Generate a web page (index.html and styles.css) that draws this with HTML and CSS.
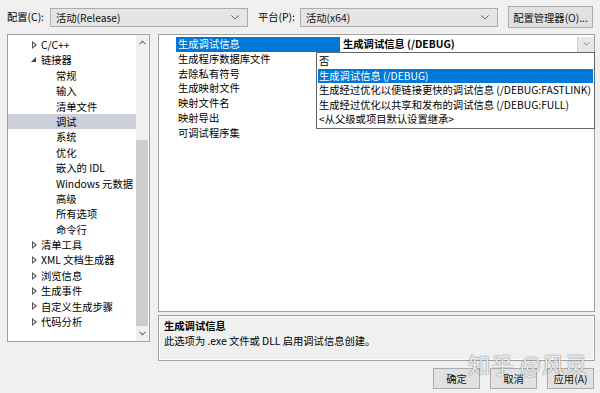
FILE: index.html
```html
<!DOCTYPE html>
<html lang="zh-CN">
<head>
<meta charset="utf-8">
<link rel="stylesheet" href="styles.css">
</head>
<body>
<div class="top">
  <span class="lbl">配置(C):</span>
  <div class="combo cfg"><span>活动(Release)</span><svg class="chev" viewBox="0 0 8 5"><path d="M0.5 0.5 L4 4 L7.5 0.5" fill="none" stroke="#606060" stroke-width="1"/></svg></div>
  <span class="lbl plat-lbl">平台(P):</span>
  <div class="combo plat"><span>活动(x64)</span><svg class="chev" viewBox="0 0 8 5"><path d="M0.5 0.5 L4 4 L7.5 0.5" fill="none" stroke="#606060" stroke-width="1"/></svg></div>
  <div class="btn mgr">配置管理器(O)...</div>
</div>
<div class="main">
  <div class="tree">
    <div class="tree-items">
      <div class="row top-lvl"><span class="tri closed"></span>C/C++</div>
      <div class="row top-lvl"><span class="tri open"></span>链接器</div>
      <div class="row child">常规</div>
      <div class="row child">输入</div>
      <div class="row child">清单文件</div>
      <div class="row child sel">调试</div>
      <div class="row child">系统</div>
      <div class="row child">优化</div>
      <div class="row child">嵌入的 IDL</div>
      <div class="row child">Windows 元数据</div>
      <div class="row child">高级</div>
      <div class="row child">所有选项</div>
      <div class="row child">命令行</div>
      <div class="row top-lvl"><span class="tri closed"></span>清单工具</div>
      <div class="row top-lvl"><span class="tri closed"></span>XML 文档生成器</div>
      <div class="row top-lvl"><span class="tri closed"></span>浏览信息</div>
      <div class="row top-lvl"><span class="tri closed"></span>生成事件</div>
      <div class="row top-lvl"><span class="tri closed"></span>自定义生成步骤</div>
      <div class="row top-lvl"><span class="tri closed"></span>代码分析</div>
    </div>
    <div class="vscroll">
      <svg class="sarrow" viewBox="0 0 8 5"><path d="M0.5 4.5 L4 1 L7.5 4.5" fill="none" stroke="#606060" stroke-width="1.2"/></svg>
      <div class="strack"><div class="sthumb"></div></div>
      <svg class="sarrow" viewBox="0 0 8 5"><path d="M0.5 0.5 L4 4 L7.5 0.5" fill="none" stroke="#606060" stroke-width="1.2"/></svg>
    </div>
  </div>
  <div class="right">
    <div class="grid">
      <div class="prow"><div class="pname psel">生成调试信息</div><div class="pval editing"><b>生成调试信息 (/DEBUG)</b><span class="ddbtn"><svg viewBox="0 0 8 5"><path d="M0.5 0.5 L4 4 L7.5 0.5" fill="none" stroke="#606060" stroke-width="1"/></svg></span></div></div>
      <div class="prow"><div class="pname">生成程序数据库文件</div><div class="pval"></div></div>
      <div class="prow"><div class="pname">去除私有符号</div><div class="pval"></div></div>
      <div class="prow"><div class="pname">生成映射文件</div><div class="pval"></div></div>
      <div class="prow"><div class="pname">映射文件名</div><div class="pval"></div></div>
      <div class="prow"><div class="pname">映射导出</div><div class="pval"></div></div>
      <div class="prow"><div class="pname">可调试程序集</div><div class="pval"></div></div>
      <div class="dropdown">
        <div class="ditem">否</div>
        <div class="ditem dsel">生成调试信息 (/DEBUG)</div>
        <div class="ditem">生成经过优化以便链接更快的调试信息 (/DEBUG:FASTLINK)</div>
        <div class="ditem">生成经过优化以共享和发布的调试信息 (/DEBUG:FULL)</div>
        <div class="ditem">&lt;从父级或项目默认设置继承&gt;</div>
      </div>
    </div>
    <div class="desc">
      <div class="desc-title">生成调试信息</div>
      <div class="desc-text">此选项为 .exe 文件或 DLL 启用调试信息创建。</div>
    </div>
  </div>
</div>
<div class="bottom">
  <div class="btn act">确定</div>
  <div class="btn act">取消</div>
  <div class="btn act">应用(A)</div>
  <div class="watermark">知乎 @风灵</div>
</div>
</body>
</html>
```

FILE: styles.css
```css
html, body {
  margin: 0;
  padding: 0;
}
body {
  width: 600px;
  height: 393px;
  background: #f0f0f0;
  font-family: "Noto Sans CJK SC", "Noto Sans", sans-serif;
  font-size: 10.3px;
  color: #000;
  overflow: hidden;
  position: relative;
  white-space: nowrap;
}
.top {
  display: flex;
  align-items: center;
  height: 22px;
  padding: 6px 7px 0 7px;
}
.lbl {
  line-height: 20px;
  width: 40px;
  flex: none;
}
.combo {
  box-sizing: border-box;
  height: 19px;
  border: 1px solid #adadad;
  background: #e5e5e5;
  display: flex;
  align-items: center;
  justify-content: space-between;
  padding: 0 8px 0 5px;
  line-height: 17px;
  color: #111;
  flex: none;
}
.chev {
  width: 8px;
  height: 5px;
}
.cfg {
  width: 198px;
  margin-left: 3px;
}
.plat-lbl {
  margin-left: 10px;
}
.plat {
  width: 198px;
  margin-left: 2px;
}
.btn {
  box-sizing: border-box;
  border: 1px solid #adadad;
  background: #e1e1e1;
  display: flex;
  align-items: center;
  justify-content: center;
  color: #111;
  flex: none;
}
.mgr {
  width: 85px;
  height: 22px;
  margin-left: 10px;
}
.main {
  display: flex;
  padding: 6px 5px 0 7px;
  gap: 8px;
}
.tree {
  box-sizing: border-box;
  width: 143px;
  height: 308px;
  border: 1px solid #a0a0a0;
  background: #fff;
  display: flex;
}
.tree-items {
  flex: 1;
  padding-top: 2px;
}
.row {
  height: 15.4px;
  line-height: 15.4px;
  display: flex;
  align-items: center;
}
.top-lvl {
  padding-left: 23px;
}
.child {
  padding-left: 48px;
}
.sel {
  background: #cdd0dc;
}
.tri {
  width: 10px;
  display: inline-block;
  position: relative;
  height: 10px;
}
.tri.closed::before {
  content: "";
  position: absolute;
  left: 1px;
  top: 1px;
  border-left: 5px solid #555;
  border-top: 4px solid transparent;
  border-bottom: 4px solid transparent;
}
.tri.closed::after {
  content: "";
  position: absolute;
  left: 2px;
  top: 3px;
  border-left: 2.5px solid #fff;
  border-top: 2px solid transparent;
  border-bottom: 2px solid transparent;
}
.tri.open::before {
  content: "";
  position: absolute;
  left: 0px;
  top: 2px;
  border-right: 5px solid #444;
  border-top: 5px solid transparent;
}
.vscroll {
  width: 12px;
  display: flex;
  flex-direction: column;
  align-items: center;
  background: #f0f0f0;
  margin-right: 1px;
}
.sarrow {
  width: 7px;
  height: 5px;
  margin: 5px 0;
  flex: none;
}
.strack {
  flex: 1;
  width: 100%;
  padding-top: 90px;
  box-sizing: border-box;
  display: flex;
}
.sthumb {
  flex: 1;
  background: #cdcdcd;
}
.right {
  width: 437px;
  display: flex;
  flex-direction: column;
}
.grid {
  box-sizing: border-box;
  height: 278px;
  border: 1px solid #a0a0a0;
  background: #fff;
  padding: 2px 0 0 17px;
  position: relative;
}
.prow {
  display: flex;
  height: 14.8px;
  line-height: 14.8px;
}
.pname {
  width: 164px;
  padding-left: 2px;
  box-sizing: border-box;
}
.psel {
  background: #0078d7;
  color: #fff;
}
.pval {
  flex: 1;
  display: flex;
  justify-content: space-between;
  padding-left: 3px;
}
.editing b {
  font-weight: bold;
}
.ddbtn {
  width: 16px;
  background: #e8e8e8;
  border-left: 1px solid #d0d0d0;
  display: flex;
  align-items: center;
  justify-content: center;
}
.ddbtn svg {
  width: 7px;
  height: 4px;
}
.dropdown {
  position: absolute;
  left: 157px;
  top: 17px;
  width: 279px;
  box-sizing: border-box;
  border: 1px solid #646464;
  background: #fff;
  padding: 1px;
}
.ditem {
  height: 14.5px;
  line-height: 14.5px;
  padding-left: 1px;
}
.dsel {
  background: #0078d7;
  color: #fff;
}
.desc {
  box-sizing: border-box;
  margin-top: 3px;
  height: 46px;
  border: 1px solid #a0a0a0;
  box-shadow: inset 0 0 0 1px #fdfdfd;
  background: #f0f0f0;
  padding: 2px 5px;
  line-height: 15px;
}
.desc-title {
  font-weight: bold;
}
.bottom {
  display: flex;
  justify-content: flex-end;
  gap: 10px;
  padding: 7px 6px 0 0;
  position: relative;
}
.act {
  width: 47px;
  height: 21px;
}
.watermark {
  position: absolute;
  right: 12px;
  top: -12px;
  font-size: 22px;
  line-height: 28px;
  color: rgba(255, 255, 255, 0.9);
  text-shadow: 0 0 1px rgba(80, 80, 80, 0.8), 0 0 2px rgba(110, 110, 110, 0.5);
  letter-spacing: 1px;
  pointer-events: none;
}
```
